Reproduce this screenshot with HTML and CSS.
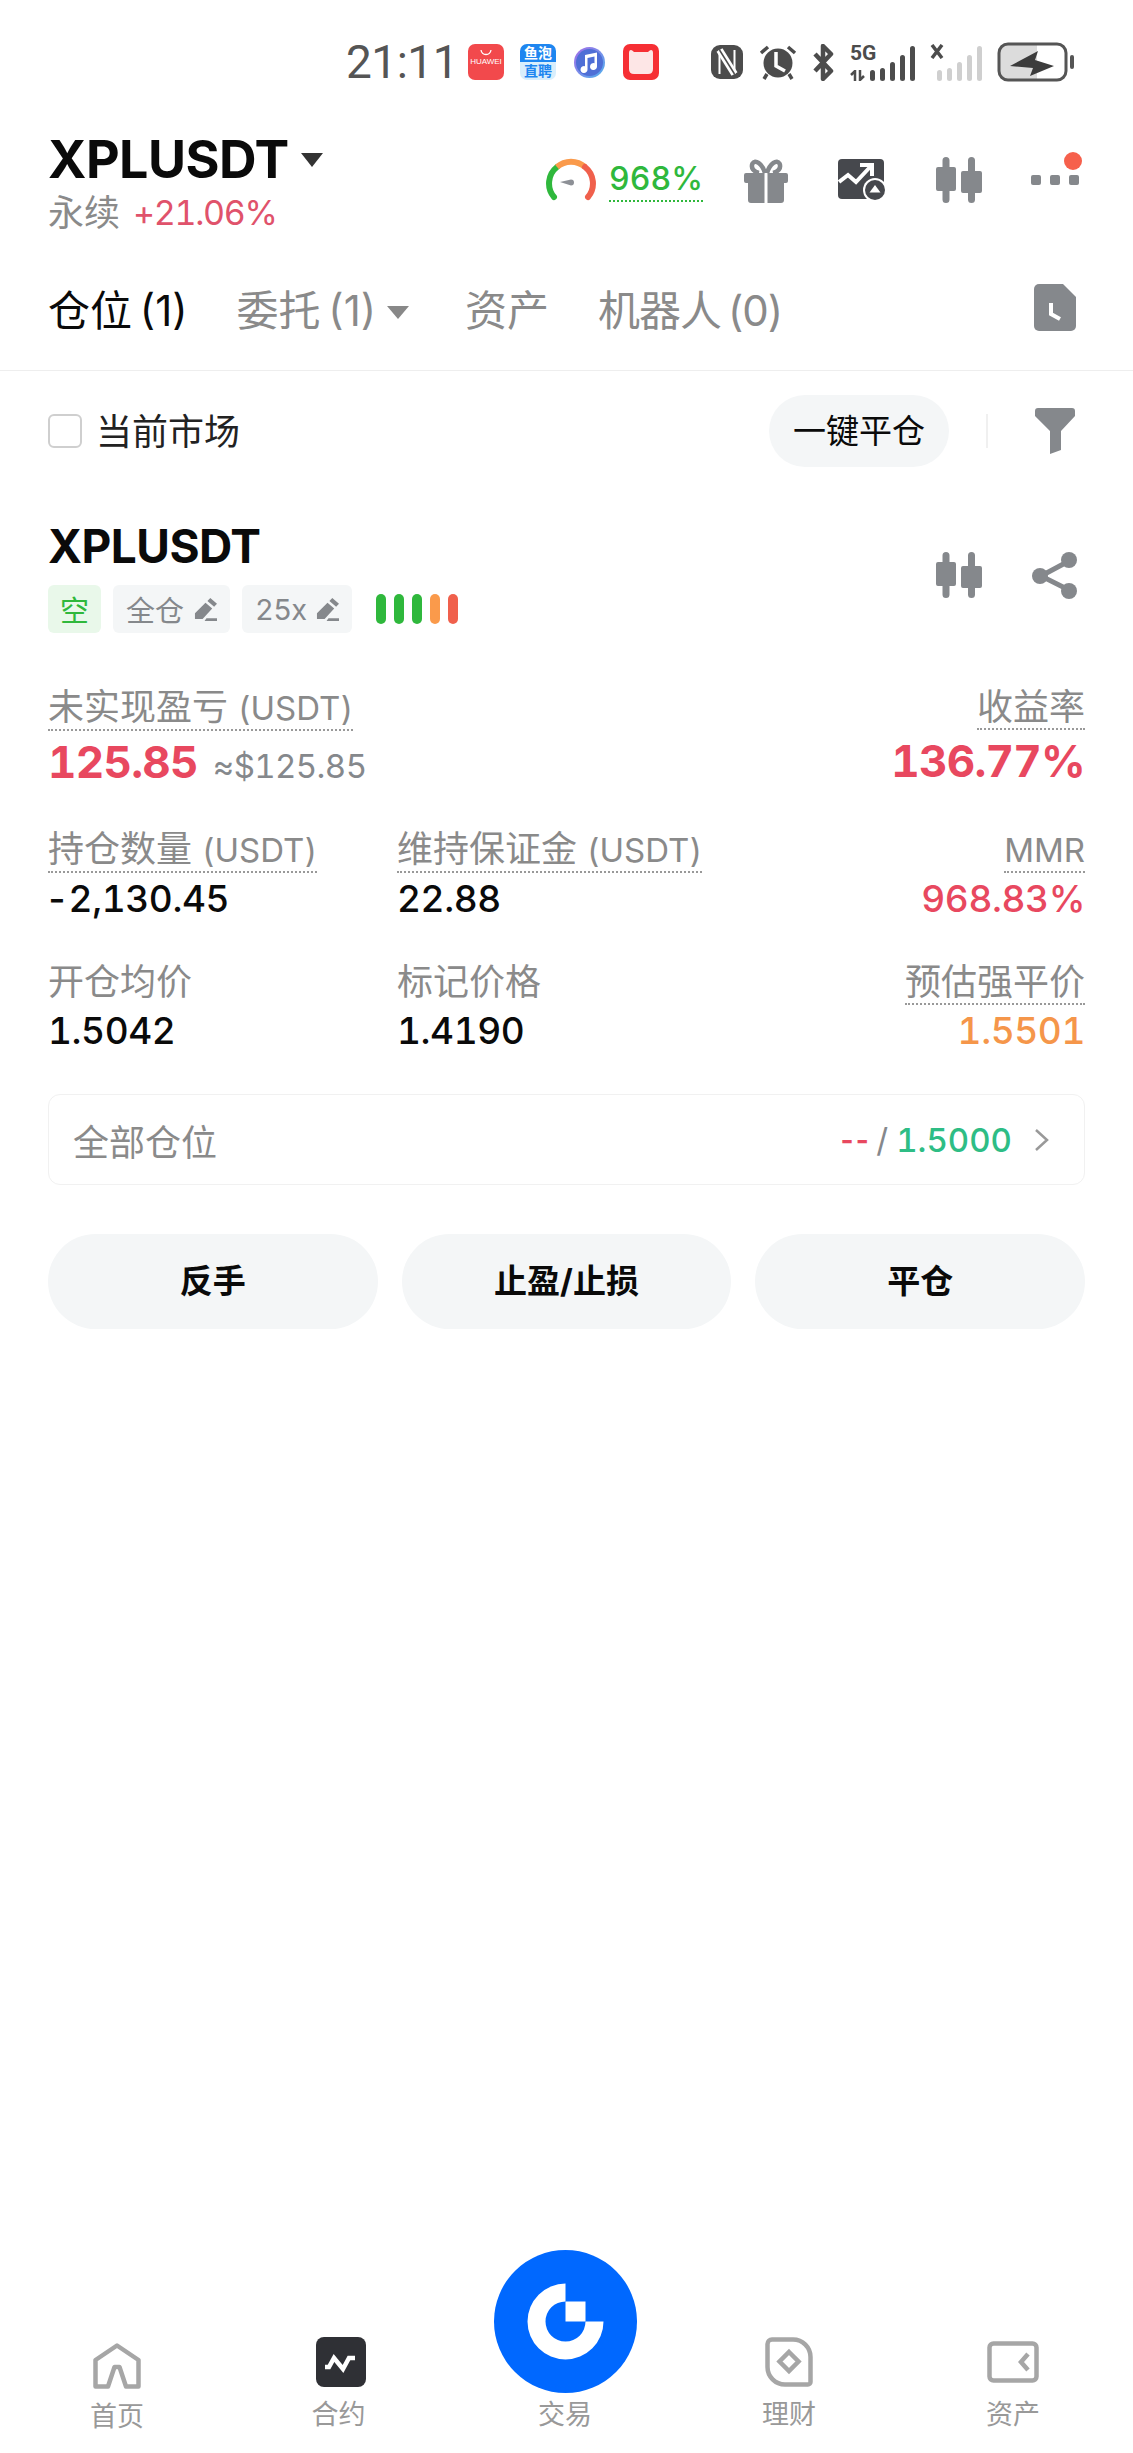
FILE: index.html
```html
<!DOCTYPE html>
<html lang="zh-CN">
<head>
  <meta charset="UTF-8">
  <meta name="viewport" content="width=device-width, initial-scale=1.0">
  <title>XPLUSDT</title>
  <link rel="stylesheet" href="styles.css">
</head>
<body>
  <svg class="defs" width="0" height="0">
    <symbol id="candles" viewBox="0 0 46 46">
      <path d="M10 0a3.500 3.500 0 0 1 3.500 3.500V10H18a2 2 0 0 1 2 2v20a2 2 0 0 1-2 2h-4.500v8.500a3.500 3.500 0 0 1-7 0V34H2a2 2 0 0 1-2-2V12a2 2 0 0 1 2-2h4.500V3.500A3.500 3.500 0 0 1 10 0z"/>
      <path d="M35.500 0A3.500 3.500 0 0 1 39 3.500V14h5a2 2 0 0 1 2 2v18a2 2 0 0 1-2 2h-5v6.500a3.500 3.500 0 0 1-7 0V36h-5a2 2 0 0 1-2-2V16a2 2 0 0 1 2-2h5V3.500A3.500 3.500 0 0 1 35.500 0z"/>
    </symbol>
    <symbol id="pencil" viewBox="0 0 24 24">
      <path d="M14 3l3-3 7 6-3 3zM12 5l7 6L9 22H1v-6zM11 24h13v-3H13z"/>
    </symbol>
  </svg>

  <div class="page">
    <div class="statusbar">
      <span class="time">21:11</span>
      <div class="app-icons">
        <div class="app app-huawei">
          <svg width="14" height="7" viewBox="0 0 14 7"><path d="M2 1c1 6 9 6 10 0" fill="none" stroke="#fff" stroke-width="1.300"/></svg>
          <span>HUAWEI</span>
        </div>
        <div class="app app-yupao"><span class="yupao-top">鱼泡</span><span class="yupao-bottom">直聘</span></div>
        <svg class="app-music" width="31" height="31" viewBox="0 0 31 31">
          <defs>
            <linearGradient id="musicBg" x1="0" y1="0" x2="1" y2="1">
              <stop offset="0" stop-color="#a46ce8"/>
              <stop offset="1" stop-color="#4fb0ec"/>
            </linearGradient>
          </defs>
          <circle cx="15.500" cy="15.500" r="15.500" fill="url(#musicBg)"/>
          <circle cx="15.500" cy="15.500" r="13.500" fill="#4f6fd6"/>
          <path d="M11 8l12-2.500v14a3.500 3.500 0 1 1-2.500-3.300V9.500L13.500 11v11.500a3.500 3.500 0 1 1-2.500-3.300z" fill="#fff"/>
        </svg>
        <svg width="36" height="36" viewBox="0 0 36 36">
          <rect width="36" height="36" rx="7" fill="#f62f34"/>
          <path d="M8 6q1 0 3 2h14q2-2 3-2 2 0 2 3v16q0 5-5 5H11q-5 0-5-5V9q0-3 2-3z" fill="#fde6e6"/>
        </svg>
      </div>
      <div class="sys-icons">
        <svg width="34" height="36" viewBox="0 0 34 36">
          <rect x="1" y="1" width="32" height="34" rx="9" fill="#4c4c4c"/>
          <path d="M9.500 6v24M24.500 6v24" stroke="#fff" stroke-width="2"/>
          <path d="M9.500 6l15 24" stroke="#fff" stroke-width="7"/>
          <path d="M9.500 6l15 24" stroke="#4c4c4c" stroke-width="1.500"/>
        </svg>
        <svg width="38" height="38" viewBox="0 0 38 38">
          <circle cx="19" cy="20" r="14.500" fill="#4c4c4c"/>
          <path d="M2 10l7-6M36 10l-7-6" fill="none" stroke="#4c4c4c" stroke-width="3.500"/>
          <path d="M8 31l-3 5M30 31l3 5" stroke="#4c4c4c" stroke-width="3.500"/>
          <path d="M17 9v14l9 5" fill="none" stroke="#fff" stroke-width="3.500"/>
        </svg>
        <svg width="23" height="37" viewBox="0 0 23 37">
          <path d="M3 10l16 17-8 8V2l8 8L3 27" fill="none" stroke="#4c4c4c" stroke-width="4.500" stroke-linejoin="round"/>
        </svg>
        <div class="signal">
          <div class="net-labels">
            <span class="net-5g">5G</span>
            <svg width="15" height="11" viewBox="0 0 15 11">
              <path d="M5 11V1L1 5M10 0v10l4-4" fill="none" stroke="#4c4c4c" stroke-width="2.500"/>
            </svg>
          </div>
          <div class="bars">
            <i class="bar b1"></i><i class="bar b2"></i><i class="bar b3"></i><i class="bar b4"></i><i class="bar b5"></i>
          </div>
        </div>
        <div class="signal signal-off">
          <svg class="net-x" width="14" height="15" viewBox="0 0 14 15">
            <path d="M2 1l10 13M12 1L2 14" stroke="#4c4c4c" stroke-width="3.500"/>
          </svg>
          <div class="bars">
            <i class="bar b1"></i><i class="bar b2"></i><i class="bar b3"></i><i class="bar b4"></i><i class="bar b5"></i>
          </div>
        </div>
        <svg width="78" height="40" viewBox="0 0 78 40">
          <path d="M10 3h30v34H10a7 7 0 0 1-7-7V10a7 7 0 0 1 7-7z" fill="#dcdcdc"/>
          <rect x="2" y="2" width="67" height="36" rx="9" fill="none" stroke="#555" stroke-width="3"/>
          <path d="M13 24L41 9l-3 9 19 6-24 10 3-8z" fill="#3c3c3c"/>
          <rect x="73" y="13" width="4" height="14" rx="2" fill="#555"/>
        </svg>
      </div>
    </div>

    <div class="header">
      <div class="symbol-block">
        <div class="symbol-line">
          <span class="symbol-name">XPLUSDT</span>
          <span class="caret caret-dark"></span>
        </div>
        <div class="symbol-sub"><span class="perp">永续</span><span class="change">+21.06%</span></div>
      </div>
      <div class="header-actions">
        <div class="risk">
          <svg width="50" height="44" viewBox="0 0 50 44">
            <path d="M8 39A21 21 0 0 1 11 9" fill="none" stroke="#2fb83c" stroke-width="6" stroke-linecap="round"/>
            <path d="M11 9A21 21 0 0 1 39 9" fill="none" stroke="#fa9a4b" stroke-width="6"/>
            <path d="M39 9A21 21 0 0 1 42 39" fill="none" stroke="#f0604c" stroke-width="6" stroke-linecap="round"/>
            <path d="M14 24l11-2.500a3 3 0 1 1 0 6z" fill="#8d9096"/>
          </svg>
          <span class="risk-value">968%</span>
        </div>
        <svg class="icon-gift" width="46" height="45" viewBox="0 0 46 45">
          <path d="M22 15C19 5 12 1 9.500 5.500 7.500 10 11 14 16 15M24 15c3-10 10-14 12.500-9.500C38.500 10 35 14 30 15" fill="none" stroke="#85888c" stroke-width="4.500"/>
          <path d="M3 15h18.500v30H8a3 3 0 0 1-3-3V25H3a2 2 0 0 1-2-2v-6a2 2 0 0 1 2-2zM24.500 15H43a2 2 0 0 1 2 2v6a2 2 0 0 1-2 2h-2v17a3 3 0 0 1-3 3H24.500z"/>
        </svg>
        <svg width="49" height="43" viewBox="0 0 49 43">
          <rect width="46" height="40" rx="4" fill="#46484d"/>
          <path d="M1 23l9-7 8 7L33 7M22 6h12v11" fill="none" stroke="#fff" stroke-width="4"/>
          <circle cx="37" cy="31" r="12" fill="#fff"/>
          <circle cx="37" cy="31" r="10" fill="#46484d"/>
          <path d="M37 26l5.500 7.500h-11z" fill="#fff"/>
        </svg>
        <svg class="icon-gray" width="46" height="46"><use href="#candles"/></svg>
        <div class="more">
          <i class="more-dot"></i><i class="more-dot"></i><i class="more-dot"></i>
          <span class="badge"></span>
        </div>
      </div>
    </div>

    <div class="tabs">
      <div class="tab tab-active">仓位 (1)</div>
      <div class="tab tab-orders">委托 (1)<span class="caret caret-gray"></span></div>
      <div class="tab">资产</div>
      <div class="tab tab-bots">机器人 (0)</div>
      <svg class="tab-doc" width="42" height="47" viewBox="0 0 42 47">
        <path d="M5 0h24l13 13v29a5 5 0 0 1-5 5H5a5 5 0 0 1-5-5V5a5 5 0 0 1 5-5z" fill="#85888c"/>
        <path d="M17 19v11l9 5" fill="none" stroke="#fff" stroke-width="4"/>
      </svg>
    </div>

    <div class="filter-row">
      <label class="check"><span class="check-box"></span><span class="check-text">当前市场</span></label>
      <div class="filter-right">
        <div class="close-all">一键平仓</div>
        <span class="filter-sep"></span>
        <svg width="40" height="46" viewBox="0 0 40 46">
          <path d="M3 0h34a3 3 0 0 1 3 3v5L26 23v19l-11 4V23L0 8V3a3 3 0 0 1 3-3z" fill="#85888c"/>
        </svg>
      </div>
    </div>

    <div class="position">
      <div class="position-head">
        <div>
          <div class="position-symbol">XPLUSDT</div>
          <div class="tags">
            <span class="tag tag-short">空</span>
            <span class="tag">全仓<svg class="tag-pencil"><use href="#pencil"/></svg></span>
            <span class="tag tag-leverage">25x<svg class="tag-pencil"><use href="#pencil"/></svg></span>
            <div class="risk-bars">
              <i class="risk-bar green"></i><i class="risk-bar green"></i><i class="risk-bar green"></i><i class="risk-bar orange"></i><i class="risk-bar red"></i>
            </div>
          </div>
        </div>
        <div class="position-actions">
          <svg class="icon-gray" width="46" height="46"><use href="#candles"/></svg>
          <svg width="46" height="47" viewBox="0 0 46 47">
            <path d="M37 9L9 24l28 14" fill="none" stroke="#85888c" stroke-width="5"/>
            <circle cx="37" cy="8" r="8" fill="#85888c"/><circle cx="8" cy="24" r="8" fill="#85888c"/><circle cx="37" cy="39" r="8" fill="#85888c"/>
          </svg>
        </div>
      </div>

      <div class="metrics">
        <div class="metric metric-wide">
          <span class="label dotted">未实现盈亏 <span class="unit">(USDT)</span></span>
          <div class="value value-lg red-text">125.85<span class="approx">≈$125.85</span></div>
        </div>
        <div class="metric metric-right">
          <span class="label dotted">收益率</span>
          <div class="value value-lg red-text">136.77%</div>
        </div>
        <div class="metric">
          <span class="label dotted">持仓数量 <span class="unit">(USDT)</span></span>
          <div class="value value-neg">-2,130.45</div>
        </div>
        <div class="metric">
          <span class="label dotted">维持保证金 <span class="unit">(USDT)</span></span>
          <div class="value">22.88</div>
        </div>
        <div class="metric metric-right">
          <span class="label dotted"><span class="unit">MMR</span></span>
          <div class="value red-text">968.83%</div>
        </div>
        <div class="metric">
          <span class="label">开仓均价</span>
          <div class="value">1.5042</div>
        </div>
        <div class="metric">
          <span class="label">标记价格</span>
          <div class="value">1.4190</div>
        </div>
        <div class="metric metric-right">
          <span class="label dotted">预估强平价</span>
          <div class="value orange-text">1.5501</div>
        </div>
      </div>

      <div class="all-positions">
        <span class="all-label">全部仓位</span>
        <div class="all-right">
          <span class="dashes red-text">--</span><span class="slash">/</span><span class="teal-text">1.5000</span>
          <svg width="15" height="24" viewBox="0 0 15 24"><path d="M2 2l11 10L2 22" fill="none" stroke="#999" stroke-width="2.500"/></svg>
        </div>
      </div>

      <div class="actions">
        <div class="action-btn">反手</div>
        <div class="action-btn">止盈/止损</div>
        <div class="action-btn">平仓</div>
      </div>
    </div>

    <div class="bottom-nav">
      <div class="nav-item nav-home">
        <svg width="48" height="46" viewBox="0 0 48 46">
          <path d="M24 2.500L45.500 17v26.500H33L26.500 24h-5L15 43.500H2.500V17z" fill="none" stroke="#a6a6a6" stroke-width="4.500" stroke-linejoin="round"/>
        </svg>
        <span>首页</span>
      </div>
      <div class="nav-item nav-contract">
        <svg width="50" height="50" viewBox="0 0 50 50">
          <rect width="50" height="50" rx="8" fill="#2f3035"/>
          <path d="M9 30h4l5-9 9 11 6-11h6" fill="none" stroke="#fff" stroke-width="4.500"/>
        </svg>
        <span>合约</span>
      </div>
      <div class="nav-item nav-trade">
        <svg width="143" height="143" viewBox="0 0 143 143">
          <circle cx="71.500" cy="71.500" r="71.500" fill="#0068ff"/>
          <path d="M71.500 33.500A38 38 0 1 0 109.500 71.500H91.500A20 20 0 1 1 71.500 51.500z" fill="#fff"/>
          <rect x="71.500" y="51.500" width="20" height="20" fill="#fff"/>
        </svg>
        <span>交易</span>
      </div>
      <div class="nav-item">
        <svg width="48" height="50" viewBox="0 0 48 50">
          <path d="M7 2.500h21A17.500 17.500 0 0 1 45.500 20v25a2.500 2.500 0 0 1-2.500 2.500H20A17.500 17.500 0 0 1 2.500 30V7A4.500 4.500 0 0 1 7 2.500z" fill="none" stroke="#a6a6a6" stroke-width="4.500"/>
          <path d="M24 15l9.500 9.500L24 34l-9.500-9.500z" fill="none" stroke="#a6a6a6" stroke-width="4.500"/>
        </svg>
        <span>理财</span>
      </div>
      <div class="nav-item nav-assets">
        <svg width="52" height="42" viewBox="0 0 52 42">
          <rect x="2.500" y="2.500" width="47" height="37" rx="4" fill="none" stroke="#a6a6a6" stroke-width="4.500"/>
          <path d="M41 13l-7 8 7 8" fill="none" stroke="#a6a6a6" stroke-width="4.500"/>
        </svg>
        <span>资产</span>
      </div>
    </div>
  </div>
</body>
</html>
```

FILE: styles.css
```css
* {
  box-sizing: border-box;
}

body {
  margin: 0;
  background-color: #fff;
  color: #0a0a0a;
  font-family: Inter, "Noto Sans CJK SC", sans-serif;
  font-variant-numeric: tabular-nums;
}

.defs {
  position: absolute;
}

.page {
  display: flex;
  flex-direction: column;
  height: 2453px;
  overflow: hidden;
}

/* status bar */
.statusbar {
  display: flex;
  align-items: center;
  height: 124px;
  padding: 0 58px 0 346px;
}

.time {
  width: 124px;
  font-family: Roboto, sans-serif;
  font-size: 46px;
  color: #555;
  letter-spacing: -0.5px;
}

.app-icons {
  display: flex;
  align-items: center;
  gap: 16px;
}

.app-music {
  margin: 0 2px;
}

.app {
  display: flex;
  flex-direction: column;
  align-items: center;
  width: 36px;
  height: 36px;
  border-radius: 7px;
  overflow: hidden;
}

.app-huawei {
  padding-top: 5px;
  background-color: #f2494c;
  color: #fff;
  font-family: "Liberation Sans", sans-serif;
  font-size: 8px;
  line-height: 12px;
}

.app-yupao {
  font-size: 14px;
  font-weight: 700;
  line-height: 18px;
}

.yupao-top {
  width: 100%;
  background-color: #1e86f0;
  color: #fff;
  text-align: center;
}

.yupao-bottom {
  width: 100%;
  height: 18px;
  background-color: #d9eefc;
  color: #1e86f0;
  text-align: center;
}

.sys-icons {
  display: flex;
  align-items: center;
  gap: 15px;
  margin-left: 51px;
}

.signal {
  display: flex;
  align-items: flex-end;
  height: 37px;
  color: #4c4c4c;
}

.net-labels {
  display: flex;
  flex-direction: column;
  justify-content: space-between;
  width: 20px;
  height: 37px;
}

.net-5g {
  font-family: Roboto, sans-serif;
  font-size: 21px;
  font-weight: 700;
  line-height: 18px;
  white-space: nowrap;
}

.net-x {
  align-self: flex-start;
  margin-right: -7px;
}

.bars {
  display: flex;
  align-items: flex-end;
  gap: 5px;
}

.bar {
  width: 5px;
  background-color: #4c4c4c;
  border-radius: 2.5px;
}

.signal-off .bar {
  background-color: #cfcfcf;
}

.b1 { height: 11px; }
.b2 { height: 13px; }
.b3 { height: 19px; }
.b4 { height: 26px; }
.b5 { height: 35px; }

/* header */
.header {
  display: flex;
  justify-content: space-between;
  height: 138px;
  padding: 12px 54px 0 48px;
}

.symbol-line {
  display: flex;
  align-items: center;
  height: 48px;
}

.symbol-name {
  font-size: 52px;
  font-weight: 700;
  line-height: 48px;
  letter-spacing: -0.5px;
}

.caret {
  display: inline-block;
  width: 0;
  height: 0;
  border-style: solid;
  border-color: transparent;
  border-bottom-width: 0;
}

.caret-dark {
  margin: 0 0 0 12px;
  border-width: 14px 11px 0;
  border-top-color: #333;
}

.caret-gray {
  margin-left: 11px;
  vertical-align: 7px;
  border-width: 13px 11px 0;
  border-top-color: #888;
}

.symbol-sub {
  display: flex;
  align-items: center;
  gap: 13px;
  margin-top: 6px;
  font-size: 34px;
  line-height: 46px;
}

.perp {
  color: #8a8a8a;
  font-size: 36px;
}

.change {
  color: #e0526b;
  letter-spacing: -1.3px;
}

.header-actions {
  display: flex;
  align-items: center;
  gap: 49px;
  height: 72px;
  margin-top: 8px;
  color: #85888c;
}

.header-actions svg {
  fill: #85888c;
}

.risk {
  display: flex;
  align-items: center;
  gap: 13px;
  margin-right: -9px;
}

.risk-value {
  padding-bottom: 1px;
  border-bottom: 2px dotted #2fb83c;
  color: #2fb83c;
  font-size: 32px;
  font-weight: 500;
  line-height: 40px;
}

.icon-gray {
  fill: #85888c;
}

.more {
  position: relative;
  display: flex;
  gap: 9px;
}

.more-dot {
  width: 10px;
  height: 10px;
  border-radius: 2px;
  background-color: #85888c;
}

.badge {
  position: absolute;
  top: -23px;
  right: -3px;
  width: 18px;
  height: 18px;
  border-radius: 50%;
  background-color: #f6604c;
}

/* tabs */
.tabs {
  display: flex;
  align-items: center;
  gap: 49px;
  height: 109px;
  padding: 0 57px 18px 48px;
  border-bottom: 1px solid #eeeeee;
  color: #8a8a8a;
  font-size: 42px;
  font-weight: 400;
  font-variant-numeric: normal;
  word-spacing: -4px;
}

.tab-active {
  color: #0a0a0a;
}

.tab-orders {
  margin-right: 7px;
}

.tab-bots {
  letter-spacing: -1px;
}

.tab-doc {
  margin-left: auto;
}

/* filter row */
.filter-row {
  display: flex;
  align-items: center;
  justify-content: space-between;
  height: 120px;
  padding: 0 58px 0 48px;
}

.check {
  display: flex;
  align-items: center;
  gap: 14px;
  font-size: 36px;
  color: #222;
}

.check-text {
  margin-top: -4px;
}

.check-box {
  width: 34px;
  height: 34px;
  border: 2px solid #cfcfcf;
  border-radius: 6px;
}

.filter-right {
  display: flex;
  align-items: center;
}

.close-all {
  padding: 0 24px;
  border-radius: 36px;
  background-color: #f4f6f7;
  font-size: 33px;
  line-height: 72px;
}

.filter-sep {
  width: 2px;
  height: 34px;
  margin: 0 47px 0 37px;
  background-color: #f0f0f0;
}

/* position card */
.position {
  padding: 28px 48px 0;
}

.position-head {
  display: flex;
  justify-content: space-between;
}

.position-symbol {
  font-size: 46px;
  font-weight: 700;
  line-height: 54px;
  letter-spacing: -0.5px;
}

.tags {
  display: flex;
  align-items: center;
  gap: 12px;
  margin-top: 12px;
}

.tag {
  display: flex;
  align-items: center;
  gap: 10px;
  height: 48px;
  padding: 0 13px;
  border-radius: 6px;
  background-color: #f4f6f7;
  color: #85888c;
  font-size: 29px;
}

.tag-short {
  padding: 0 12px;
  background-color: #e9f8ea;
  color: #2fb83c;
}

.tag-leverage {
  letter-spacing: -0.7px;
}

.tag-pencil {
  width: 23px;
  height: 23px;
  fill: #85888c;
}

.risk-bars {
  display: flex;
  gap: 8px;
  margin-left: 12px;
}

.risk-bar {
  width: 10px;
  height: 30px;
  border-radius: 5px;
}

.risk-bar.green { background-color: #2fb83c; }
.risk-bar.orange { background-color: #fa9a4b; }
.risk-bar.red { background-color: #f0604c; }

.position-actions {
  display: flex;
  gap: 50px;
  margin: 33px 7px 0 0;
}

.metrics {
  display: grid;
  grid-template-columns: 349px 1fr auto;
  row-gap: 42px;
  margin-top: 55px;
}

.metric {
  display: flex;
  flex-direction: column;
  align-items: flex-start;
}

.metric-wide {
  grid-column: span 2;
}

.metric-right {
  align-items: flex-end;
}

.label {
  padding-bottom: 2px;
  border-bottom: 2px solid transparent;
  color: #8a8a8a;
  font-size: 36px;
  line-height: 38px;
}

.unit {
  font-size: 33px;
}

.dotted {
  border-bottom: 2px dotted #999;
}

.value {
  margin-top: 4px;
  font-size: 37px;
  font-weight: 500;
  line-height: 44px;
  letter-spacing: -0.4px;
}

.value-neg {
  margin-left: -3px;
}

.value-lg {
  margin-top: 9px;
  font-size: 44px;
  font-weight: 700;
  line-height: 44px;
  letter-spacing: -0.7px;
}

.approx {
  margin-left: 15px;
  color: #85888c;
  font-size: 33px;
  font-weight: 400;
  letter-spacing: -0.6px;
}

.red-text { color: #e8485f; }
.orange-text { color: #f5964a; }
.teal-text { color: #2ebd85; }

.all-positions {
  display: flex;
  align-items: center;
  justify-content: space-between;
  height: 91px;
  margin-top: 41px;
  padding: 0 35px 0 24px;
  border: 1px solid #f1f1f1;
  border-radius: 12px;
}

.all-label {
  color: #8a8a8a;
  font-size: 36px;
}

.all-right {
  display: flex;
  align-items: center;
  font-size: 33px;
  font-weight: 500;
}

.dashes {
  font-size: 28px;
  font-weight: 700;
  letter-spacing: -3px;
}

.slash {
  margin: 0 8px;
  color: #85888c;
  font-weight: 400;
}

.all-right svg {
  margin-left: 22px;
}

.actions {
  display: grid;
  grid-template-columns: repeat(3, 1fr);
  gap: 24px;
  margin-top: 49px;
}

.action-btn {
  border-radius: 48px;
  background-color: #f4f6f7;
  font-size: 33px;
  font-weight: 700;
  line-height: 95px;
  text-align: center;
}

/* bottom navigation */
.bottom-nav {
  display: grid;
  grid-template-columns: repeat(5, 224px);
  align-items: end;
  margin-top: auto;
  padding: 0 5px 22px;
}

.nav-item {
  display: flex;
  flex-direction: column;
  align-items: center;
  gap: 12px;
  color: #999;
  font-size: 27px;
  line-height: 32px;
}

.nav-trade {
  gap: 6px;
}

.nav-home {
  gap: 12px;
  margin-bottom: -2px;
}

.nav-contract span {
  margin-right: 5px;
}

.nav-assets {
  gap: 16px;
}
```
